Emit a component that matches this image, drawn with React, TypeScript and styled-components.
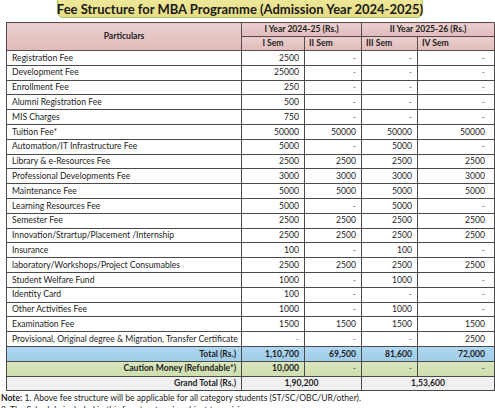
import React from "react";
import styled, { createGlobalStyle } from "styled-components";

interface FeeRow {
  name: string;
  values: string[];
}

const rows: FeeRow[] = [
  { name: "Registration Fee", values: ["2500", "-", "-", "-"] },
  { name: "Development Fee", values: ["25000", "-", "-", "-"] },
  { name: "Enrollment Fee", values: ["250", "-", "-", "-"] },
  { name: "Alumni Registration Fee", values: ["500", "-", "-", "-"] },
  { name: "MIS Charges", values: ["750", "-", "-", "-"] },
  { name: "Tuition Fee*", values: ["50000", "50000", "50000", "50000"] },
  { name: "Automation/IT Infrastructure Fee", values: ["5000", "-", "5000", "-"] },
  { name: "Library & e-Resources Fee", values: ["2500", "2500", "2500", "2500"] },
  { name: "Professional Developments Fee", values: ["3000", "3000", "3000", "3000"] },
  { name: "Maintenance Fee", values: ["5000", "5000", "5000", "5000"] },
  { name: "Learning Resources Fee", values: ["5000", "-", "5000", "-"] },
  { name: "Semester Fee", values: ["2500", "2500", "2500", "2500"] },
  { name: "Innovation/Strartup/Placement /Internship", values: ["2500", "2500", "2500", "2500"] },
  { name: "Insurance", values: ["100", "-", "100", "-"] },
  { name: "laboratory/Workshops/Project Consumables", values: ["2500", "2500", "2500", "2500"] },
  { name: "Student Welfare Fund", values: ["1000", "-", "1000", "-"] },
  { name: "Identity Card", values: ["100", "-", "-", "-"] },
  { name: "Other Activities Fee", values: ["1000", "-", "1000", "-"] },
  { name: "Examination Fee", values: ["1500", "1500", "1500", "1500"] },
  { name: "Provisional, Original degree & Migration, Transfer Certificate", values: ["-", "-", "-", "2500"] },
];

export default function App() {
  return (
    <>
      <GlobalStyle />
      <StyledPage>
        <StyledTitle>Fee Structure for MBA Programme (Admission Year 2024-2025)</StyledTitle>
        <StyledTable>
          <colgroup>
            <col style={{ width: 235 }} />
            <col style={{ width: 63 }} />
            <col style={{ width: 57 }} />
            <col style={{ width: 56 }} />
            <col style={{ width: 77 }} />
          </colgroup>
          <thead>
            <tr>
              <StyledHead rowSpan={2}>Particulars</StyledHead>
              <StyledHead colSpan={2} $low>I Year 2024-25 (Rs.)</StyledHead>
              <StyledHead colSpan={2} $low>II Year 2025-26 (Rs.)</StyledHead>
            </tr>
            <tr>
              <StyledHead $low>I Sem</StyledHead>
              <StyledHead $low $left>II Sem</StyledHead>
              <StyledHead $low $left>III Sem</StyledHead>
              <StyledHead $low $left>IV Sem</StyledHead>
            </tr>
          </thead>
          <tbody>
            {rows.map((row, idx) => (
              <StyledRow key={idx}>
                <StyledName>{row.name}</StyledName>
                {row.values.map((val, i) => (
                  <StyledNum key={i} $last={i === 3} $dash={val === "-"}>
                    {val}
                  </StyledNum>
                ))}
              </StyledRow>
            ))}
            <StyledRow $tone="total">
              <StyledLabel>Total (Rs.)</StyledLabel>
              <StyledNum $bold>1,10,700</StyledNum>
              <StyledNum $bold>69,500</StyledNum>
              <StyledNum $bold>81,600</StyledNum>
              <StyledNum $bold $last>72,000</StyledNum>
            </StyledRow>
            <StyledRow $tone="caution">
              <StyledLabel>Caution Money (Refundable*)</StyledLabel>
              <StyledNum $bold>10,000</StyledNum>
              <StyledNum $bold $dash>-</StyledNum>
              <StyledNum $bold $dash>-</StyledNum>
              <StyledNum $bold $dash $last>-</StyledNum>
            </StyledRow>
            <StyledRow $tone="grand">
              <StyledLabel>Grand Total (Rs.)</StyledLabel>
              <StyledMerged colSpan={2}>1,90,200</StyledMerged>
              <StyledMerged colSpan={2}>1,53,600</StyledMerged>
            </StyledRow>
          </tbody>
        </StyledTable>
        <StyledNote>
          <b>Note:</b> 1. Above fee structure will be applicable for all category students (ST/SC/OBC/UR/other).
        </StyledNote>
        <StyledNote>2. The Schedule included in this fee structure is subject to revision as per norms.</StyledNote>
      </StyledPage>
    </>
  );
}

// style
const GlobalStyle = createGlobalStyle`
  html, body {
    margin: 0;
    padding: 0;
    background: #fff;
    overflow: hidden;
  }
  body {
    width: 495px;
    height: 408px;
    font-family: Lato, "Liberation Sans", sans-serif;
    color: #1d1d1d;
  }
`;

const StyledPage = styled.div`
  display: flex;
  flex-direction: column;
  align-items: flex-start;
  width: 495px;
  height: 408px;
  overflow: hidden;
`;

const StyledTitle = styled.h1`
  box-sizing: border-box;
  align-self: flex-start;
  margin: -5px 0 0 57px;
  width: 366px;
  height: 28px;
  padding-top: 5px;
  display: flex;
  align-items: center;
  justify-content: center;
  font-size: 13px;
  font-weight: 700;
  color: #1a1a1a;
  background: linear-gradient(#f0ea9e, #e6dc84);
  border: 1.5px solid #a7c466;
  border-radius: 6px;
  white-space: nowrap;
`;

const StyledTable = styled.table`
  margin: 4px 0 0 6px;
  width: 488px;
  table-layout: fixed;
  border-collapse: collapse;
  border: 1px solid #3a3a3a;
  font-size: 8.6px;
`;

const StyledHead = styled.th<{ $low?: boolean; $left?: boolean }>`
  height: ${(p) => (p.$low ? "13px" : "27px")};
  padding: 0 4px;
  font-weight: 700;
  font-size: 8.6px;
  text-align: ${(p) => (p.$left ? "left" : "center")};
  background: linear-gradient(#ead0cf, #e0bbba);
  border: 1px solid #5a4c4c;
  line-height: 1;
`;

const StyledRow = styled.tr<{ $tone?: "total" | "caution" | "grand" }>`
  height: 14.8px;
  background: ${(p) =>
    p.$tone === "total"
      ? "linear-gradient(#b0d8f1, #a0cdea)"
      : p.$tone === "caution"
      ? "linear-gradient(#dae6bf, #cfdfae)"
      : p.$tone === "grand"
      ? "#f0f0f0"
      : "#fff"};
`;

const StyledName = styled.td`
  padding: 0 5px;
  border: 1px solid #4a4a4a;
  white-space: nowrap;
  overflow: hidden;
  line-height: 1;
`;

const StyledLabel = styled(StyledName)`
  text-align: right;
  font-weight: 700;
`;

const StyledNum = styled.td<{ $last?: boolean; $dash?: boolean; $bold?: boolean }>`
  padding: 0 ${(p) => (p.$last ? "9px" : "5px")} 0 0;
  text-align: right;
  border: 1px solid #4a4a4a;
  font-weight: ${(p) => (p.$bold ? 700 : 400)};
  color: ${(p) => (p.$dash ? "#777" : "inherit")};
  line-height: 1;
`;

const StyledMerged = styled.td`
  text-align: center;
  font-weight: 700;
  border: 1px solid #4a4a4a;
  line-height: 1;
`;

const StyledNote = styled.p`
  margin: 2px 0 0 1px;
  font-size: 8.6px;
  line-height: 10px;
  white-space: nowrap;
`;
